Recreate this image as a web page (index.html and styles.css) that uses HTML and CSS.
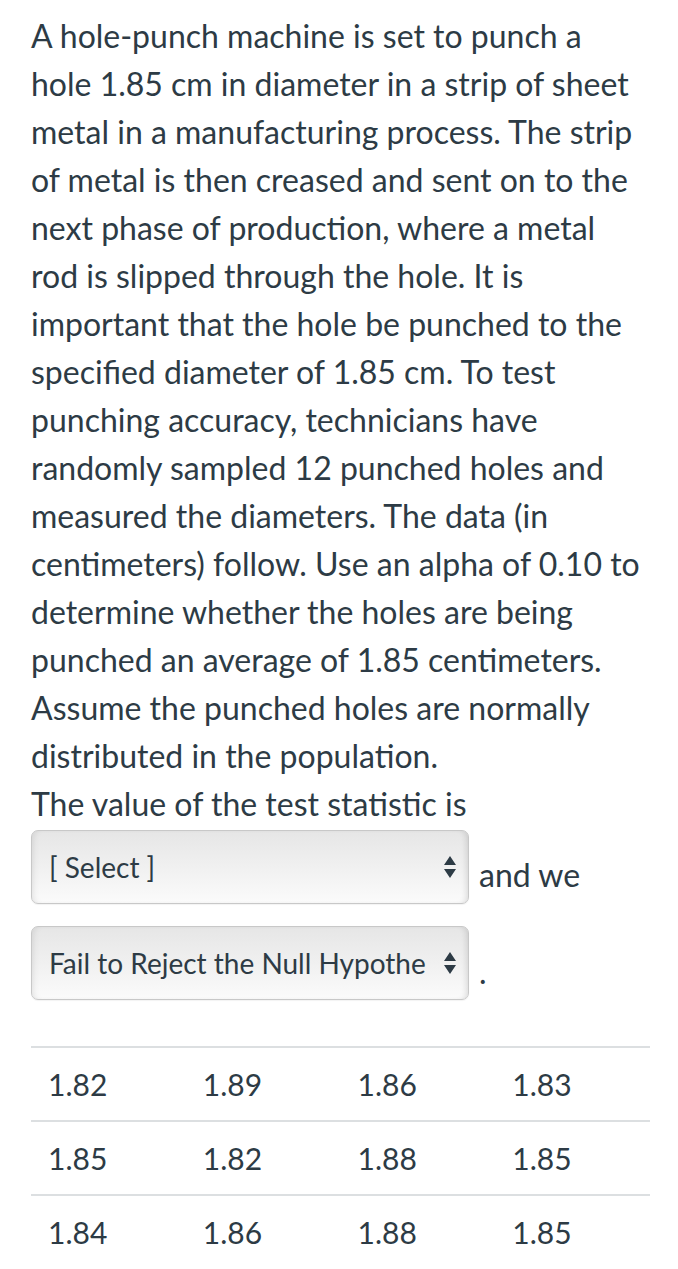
FILE: index.html
```html
<!DOCTYPE html>
<html lang="en">
<head>
<meta charset="utf-8">
<title>Hole-punch question</title>
<link rel="stylesheet" href="styles.css">
</head>
<body>
<div class="question">
  <p class="text">A hole-punch machine is set to punch a hole 1.85 cm in diameter in a strip of sheet metal in a manufacturing process. The strip of metal is then creased and sent on to the next phase of production, where a metal rod is slipped through the hole. It is important that the hole be punched to the specified diameter of 1.85 cm. To test punching accuracy, technicians have randomly sampled 12 punched holes and measured the diameters. The data (in centimeters) follow. Use an alpha of 0.10 to determine whether the holes are being punched an average of 1.85 centimeters. Assume the punched holes are normally distributed in the population.</p>
  <p class="text">The value of the test statistic is</p>
  <div class="answer-row first">
    <div class="select">
      <span class="select-label">[ Select ]</span>
      <svg class="arrows" width="12" height="22" viewBox="0 0 12 22"><path d="M6 0 L12 9 L0 9 Z M0 13 L12 13 L6 22 Z" fill="#2d3b45"/></svg>
    </div>
    <span class="after after-and">and we</span>
  </div>
  <div class="answer-row second">
    <div class="select">
      <span class="select-label">Fail to Reject the Null Hypothe</span>
      <svg class="arrows" width="12" height="22" viewBox="0 0 12 22"><path d="M6 0 L12 9 L0 9 Z M0 13 L12 13 L6 22 Z" fill="#2d3b45"/></svg>
    </div>
    <span class="after after-dot">.</span>
  </div>
  <table class="data">
    <tr><td>1.82</td><td>1.89</td><td>1.86</td><td>1.83</td></tr>
    <tr><td>1.85</td><td>1.82</td><td>1.88</td><td>1.85</td></tr>
    <tr><td>1.84</td><td>1.86</td><td>1.88</td><td>1.85</td></tr>
  </table>
</div>
</body>
</html>
```
FILE: styles.css
```css
html, body {
  margin: 0;
  padding: 0;
  background: #ffffff;
}
body {
  font-family: Lato, "Open Sans", sans-serif;
  color: #2d3b45;
  font-size: 32px;
  line-height: 48px;
}
.question {
  width: 619px;
  padding: 12px 0 0 31px;
}
.text {
  margin: 0;
}
.answer-row {
  display: flex;
  align-items: flex-start;
}
.answer-row.first {
  margin-top: 2px;
}
.answer-row.second {
  margin-top: 22px;
}
.select {
  box-sizing: border-box;
  width: 438px;
  height: 74px;
  border: 1px solid #c8c8c8;
  border-radius: 7px;
  background: linear-gradient(to bottom, #e6e6e6 0%, #efefef 45%, #fbfbfb 100%);
  box-shadow: inset -5px 0 6px -4px rgba(0,0,0,0.14), inset 5px 0 6px -4px rgba(0,0,0,0.10), 0 1px 1px rgba(0,0,0,0.05);
  display: flex;
  align-items: center;
  justify-content: space-between;
  padding: 0 12px 0 17px;
  font-size: 28px;
  line-height: 34px;
}
.select-label {
  white-space: nowrap;
  overflow: hidden;
}
.arrows {
  flex: none;
  display: block;
}
.after {
  padding-left: 10px;
}
.after-and {
  margin-top: 21px;
}
.after-dot {
  margin-top: 22px;
}
.data {
  margin-top: 46px;
  width: 619px;
  border-collapse: collapse;
  table-layout: fixed;
}
.data td {
  border-top: 2px solid #dcdfe1;
  height: 72px;
  padding: 0 0 0 17px;
  vertical-align: middle;
  font-size: 30px;
  line-height: 40px;
}
```
